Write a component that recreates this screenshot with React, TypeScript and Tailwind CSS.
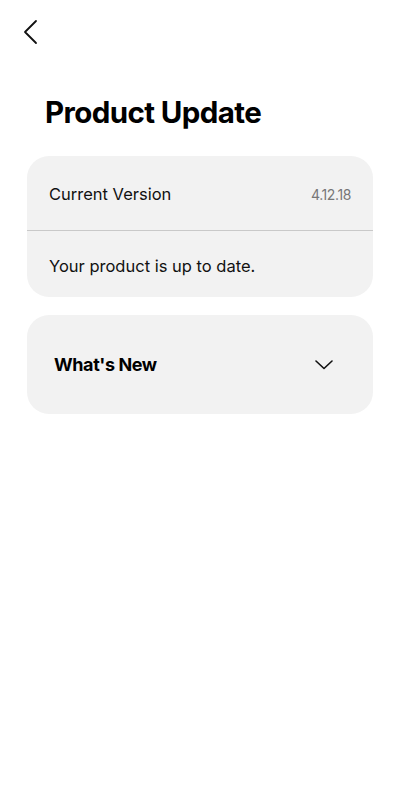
import React from "react";

export default function App() {
  return (
    <div className="w-[400px] h-[800px] bg-white text-black" style={{ fontFamily: "Inter, 'Liberation Sans', sans-serif" }}>
      <div className="pt-[19px] pl-[22px] h-[60px]">
        <svg width="18" height="26" viewBox="0 0 18 26" fill="none">
          <path d="M14 2 L3 13 L14 24" stroke="#111" strokeWidth="1.8" strokeLinecap="round" strokeLinejoin="round" />
        </svg>
      </div>
      <h1 className="mt-[34px] ml-[45px] text-[29.5px] font-bold leading-[36px] tracking-[-0.6px]">Product Update</h1>
      <div className="mx-[27px] mt-[26px] rounded-[22px] bg-[#f2f2f2]">
        <div className="h-[74px] flex items-center justify-between pl-[22px] pr-[22px] pt-[2px]">
          <span className="text-[16.5px] text-[#111]">Current Version</span>
          <span className="text-[14px] text-[#777] tracking-[-0.4px]">4.12.18</span>
        </div>
        <div className="h-px bg-[#c9c9c9]" />
        <div className="h-[66px] flex items-center pl-[22px] pt-[4px]">
          <span className="text-[16.5px] text-[#111]">Your product is up to date.</span>
        </div>
      </div>
      <div className="mx-[27px] mt-[18px] h-[99px] rounded-[22px] bg-[#f2f2f2] flex items-center justify-between pl-[27px] pr-[40px]">
        <span className="text-[18px] font-bold tracking-[-0.4px]">What's New</span>
        <svg width="18" height="10" viewBox="0 0 18 10" fill="none">
          <path d="M1 1 L9 8.5 L17 1" stroke="#111" strokeWidth="1.6" strokeLinecap="round" strokeLinejoin="round" />
        </svg>
      </div>
    </div>
  );
}
